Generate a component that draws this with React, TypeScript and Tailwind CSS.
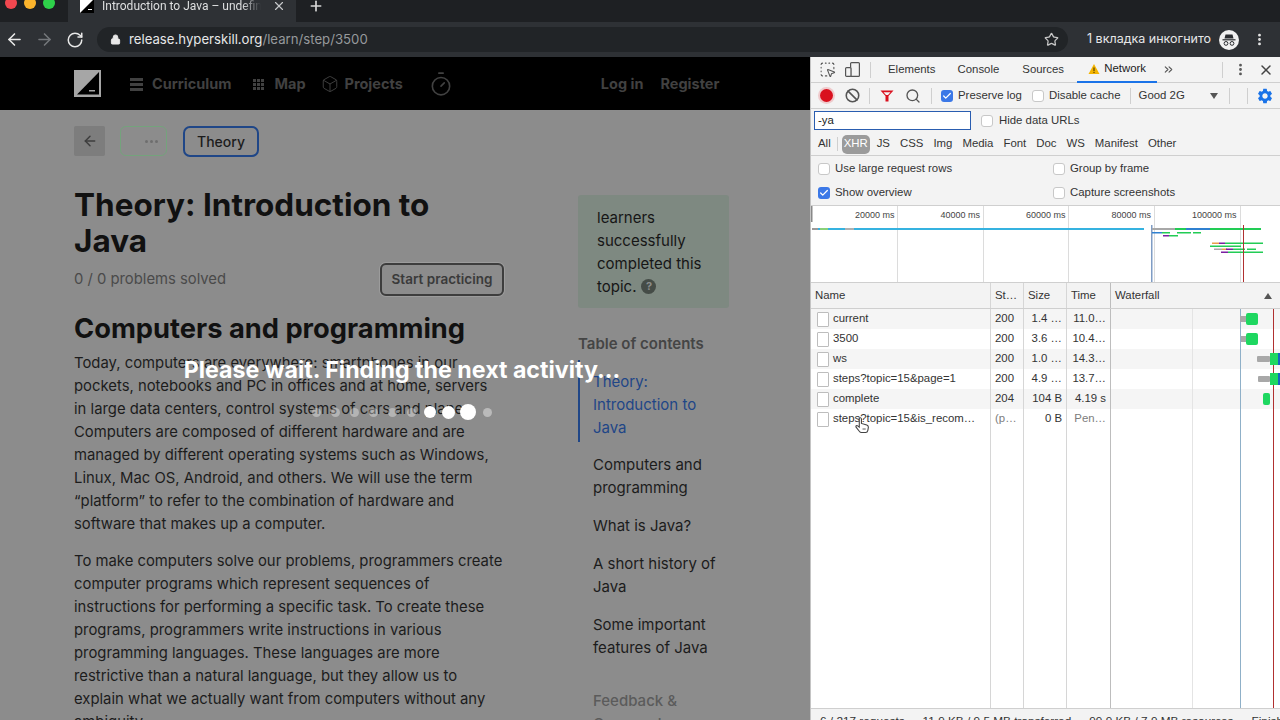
import { ArrowLeft, ArrowRight, Ban, Box, Check, ChevronsRight, EllipsisVertical, Lock, Plus, RotateCw, Search, SquareDashedMousePointer, Star, Timer, X } from 'lucide-react';
import { MdSettings } from 'react-icons/md';

const paragraphOne = [
  'Today, computers are everywhere: smartphones in our',
  'pockets, notebooks and PC in offices and at home, servers',
  'in large data centers, control systems of cars and planes.',
  'Computers are composed of different hardware and are',
  'managed by different operating systems such as Windows,',
  'Linux, Mac OS, Android, and others. We will use the term',
  '“platform” to refer to the combination of hardware and',
  'software that makes up a computer.',
];

const paragraphTwo = [
  'To make computers solve our problems, programmers create',
  'computer programs which represent sequences of',
  'instructions for performing a specific task. To create these',
  'programs, programmers write instructions in various',
  'programming languages. These languages are more',
  'restrictive than a natural language, but they allow us to',
  'explain what we actually want from computers without any',
  'ambiguity.',
];

const tocItems = [
  ['Computers and', 'programming'],
  ['What is Java?'],
  ['A short history of', 'Java'],
  ['Some important', 'features of Java'],
];

const requests = [
  { name: 'current', status: '200', size: '1.4 …', time: '11.0…' },
  { name: '3500', status: '200', size: '3.6 …', time: '10.4…' },
  { name: 'ws', status: '200', size: '1.0 …', time: '14.3…' },
  { name: 'steps?topic=15&page=1', status: '200', size: '4.9 …', time: '13.7…' },
  { name: 'complete', status: '204', size: '104 B', time: '4.19 s' },
  { name: 'steps?topic=15&is_recom…', status: '(p…', size: '0 B', time: 'Pen…', pending: true },
];

const typeFilters = ['JS', 'CSS', 'Img', 'Media', 'Font', 'Doc', 'WS', 'Manifest', 'Other'];

function Logo({ className }: { className: string }) {
  return (
    <svg viewBox="0 0 27 27" className={className}>
      <rect width="27" height="27" fill="#a6a6a6" />
      <path d="M3 24.5 25 2v22.5z" fill="#000" />
      <rect x="15" y="20" width="6" height="1.5" fill="#a6a6a6" />
    </svg>
  );
}

function Incognito() {
  return (
    <svg viewBox="0 0 20 20" className="w-5 h-5 block">
      <circle cx="10" cy="10" r="10" fill="#f1f1f1" />
      <path d="M6.500 4.500h7l1 4h-9z" fill="#2b2d31" />
      <rect x="3.500" y="9.200" width="13" height="1.200" fill="#2b2d31" />
      <circle cx="7" cy="13.400" r="1.900" fill="none" stroke="#2b2d31" strokeWidth="1" />
      <circle cx="13" cy="13.400" r="1.900" fill="none" stroke="#2b2d31" strokeWidth="1" />
    </svg>
  );
}

function Checkbox({ checked }: { checked?: boolean }) {
  if (checked) {
    return (
      <span className="w-[12px] h-[12px] rounded-[3px] bg-[#3b78e7] flex items-center justify-center shrink-0">
        <Check className="w-[10px] h-[10px] text-white" strokeWidth={3} />
      </span>
    );
  }
  return <span className="block w-[12px] h-[12px] rounded-[3px] border border-[#c8c8c8] bg-white shrink-0" />;
}

function Overview() {
  return (
    <svg viewBox="1 1 469 76" className="w-[469px] h-[76px] block">
      <rect x="1" y="0" width="1.500" height="17" fill="#888" />
      {[87, 173, 258, 344, 430].map((x) => (
        <rect key={x} x={x} y="0" width="1" height="77" fill="#dcdcdc" />
      ))}
      <rect x="2" y="23" width="332" height="2" fill="#35b2e0" />
      <rect x="2" y="23" width="6" height="2" fill="#9a9a9a" />
      <rect x="10" y="23" width="8" height="2" fill="#8ad07a" />
      <rect x="35" y="23" width="9" height="2" fill="#b0b0b0" />
      <rect x="341" y="20" width="1.500" height="57" fill="#7f9cc4" />
      <rect x="342" y="23" width="23" height="2" fill="#a8a8a8" />
      <rect x="365" y="23" width="86" height="2" fill="#22cc55" />
      <rect x="376" y="23" width="24" height="2" fill="#2f80d0" />
      <rect x="342" y="27" width="10" height="1.500" fill="#2f80d0" />
      <rect x="352" y="27" width="8" height="1.500" fill="#22cc55" />
      <rect x="367" y="27" width="14" height="1.500" fill="#22cc55" />
      <rect x="383" y="27" width="8" height="1.500" fill="#22cc55" />
      <rect x="353" y="30" width="6" height="1.500" fill="#7b1fa2" />
      <rect x="359" y="30" width="9" height="1.500" fill="#22cc55" />
      <rect x="402" y="37.500" width="7" height="1.500" fill="#e8a04c" />
      <rect x="409" y="37.500" width="6" height="1.500" fill="#7b1fa2" />
      <rect x="415" y="37.500" width="38" height="1.500" fill="#22cc55" />
      <rect x="400" y="40.500" width="31" height="1.500" fill="#22cc55" />
      <rect x="404" y="43.500" width="8" height="1.500" fill="#a8a8a8" />
      <rect x="412" y="43.500" width="5" height="1.500" fill="#e8a04c" />
      <rect x="416" y="43.500" width="7" height="1.500" fill="#7b1fa2" />
      <rect x="423" y="43.500" width="12" height="1.500" fill="#22cc55" />
      <rect x="437" y="43.500" width="9" height="1.500" fill="#22cc55" />
      <rect x="411" y="46.500" width="7" height="1.500" fill="#7b1fa2" />
      <rect x="418" y="46.500" width="35" height="1.500" fill="#22cc55" />
      <rect x="433" y="20" width="1" height="57" fill="#b03030" />
    </svg>
  );
}

function Waterfall() {
  return (
    <svg viewBox="0 0 169 400" className="absolute left-0 top-0 w-[169px] h-[400px]">
      <rect x="81" y="0" width="1" height="400" fill="#e4e4e4" />
      <rect x="129" y="0" width="1" height="400" fill="#8fb0c8" />
      <rect x="162" y="0" width="1" height="400" fill="#b03030" />
      <rect x="129" y="7" width="6" height="6" fill="#a8a8a8" />
      <rect x="135" y="4" width="12" height="12" rx="2" fill="#1ed760" />
      <rect x="130" y="27" width="5" height="6" fill="#a8a8a8" />
      <rect x="135" y="24" width="12" height="12" rx="2" fill="#1ed760" />
      <rect x="146" y="47" width="13" height="6" rx="1" fill="#a8a8a8" />
      <rect x="159" y="44" width="8" height="12" fill="#1ed760" />
      <rect x="167" y="44" width="2" height="12" fill="#1565c0" />
      <rect x="147" y="67" width="12" height="6" rx="1" fill="#a8a8a8" />
      <rect x="159" y="64" width="8" height="12" fill="#1ed760" />
      <rect x="167" y="64" width="2" height="12" fill="#1565c0" />
      <rect x="152" y="84" width="7" height="12" rx="2" fill="#1ed760" />
    </svg>
  );
}

// one table column: 20px cells, stripes start on the first row
function Column({ width, values, align, pending }: { width: string; values: string[]; align?: string; pending?: boolean }) {
  return (
    <div className={`${width} shrink-0 border-r border-[#d6d6d6]`}>
      {values.map((value, i) => (
        <div
          key={i}
          className={`h-5 flex items-center px-[4px] whitespace-nowrap overflow-hidden ${align ?? ''} ${i % 2 === 0 ? 'bg-[#f5f5f5]' : 'bg-white'} ${pending && i === 5 ? 'text-[#7c7c7c]' : ''}`}
        >
          {value}
        </div>
      ))}
    </div>
  );
}

function Browser() {
  return (
    <div className="font-['Inter',sans-serif] shrink-0">
      <div className="h-[22px] bg-[#1e2023] flex overflow-hidden">
        <div className="w-[68px] relative">
          <span className="absolute left-[5px] -top-[3px] w-3 h-3 rounded-full bg-[#f1474f]" />
          <span className="absolute left-[24px] -top-[3px] w-3 h-3 rounded-full bg-[#fbb32c]" />
          <span className="absolute left-[43px] -top-[3px] w-3 h-3 rounded-full bg-[#2ed14a]" />
        </div>
        <div className="w-[228px] bg-[#2e3135] flex items-start gap-2 pl-[12px] pr-[10px] pt-[5px] -mt-[6px] h-[28px]">
          <svg viewBox="0 0 14 14" className="w-[14px] h-[14px] shrink-0">
            <rect width="14" height="14" fill="#fff" />
            <path d="M0 14 14 0v14z" fill="#000" />
            <rect x="8" y="10" width="4" height="1" fill="#fff" />
          </svg>
          <span className="text-[12px] leading-[14px] font-['Roboto',sans-serif] text-[#dedfe0] whitespace-nowrap overflow-hidden flex-1 [mask-image:linear-gradient(to_right,black_88%,transparent)]">Introduction to Java – undefine</span>
          <X className="w-[14px] h-[14px] text-[#c6c8ca] shrink-0 ml-[3px]" />
        </div>
        <Plus className="w-[16px] h-[16px] text-[#d8d8d8] ml-[12px] mt-[-2px]" strokeWidth={2.5} />
      </div>
      <div className="h-[35px] bg-[#2e3135] flex items-center pl-[5px]">
        <ArrowLeft className="w-[19px] h-[19px] text-[#e8e8e8]" />
        <ArrowRight className="w-[19px] h-[19px] text-[#74777b] ml-[11px]" />
        <RotateCw className="w-[18px] h-[18px] text-[#e8e8e8] ml-[12px]" />
        <div className="ml-[13px] w-[971px] h-[25px] rounded-full bg-[#212427] flex items-center pl-[13px]">
          <Lock className="w-[11px] h-[11px] text-[#e8e8e8] fill-[#e8e8e8]" />
          <span className="ml-[8px] text-[13.200px] text-[#e6e7e8]">release.hyperskill.org</span>
          <span className="text-[13.200px] text-[#96999c]">/learn/step/3500</span>
          <Star className="w-[15px] h-[15px] text-[#c8c8c8] ml-auto mr-[9px]" />
        </div>
        <span className="ml-[19px] text-[12.500px] text-[#e6e7e8] whitespace-nowrap">1 вкладка инкогнито</span>
        <span className="ml-[8px]"><Incognito /></span>
        <EllipsisVertical className="w-[15px] h-[15px] text-[#e8e8e8] ml-[13px]" strokeWidth={2.5} />
      </div>
    </div>
  );
}

function LoadingOverlay() {
  return (
    <div className="absolute left-0 right-0 top-[300px] pr-[6px] flex flex-col items-center">
      <div className="text-[23.200px] leading-[27px] font-bold text-white whitespace-nowrap">Please wait. Finding the next activity...</div>
      <div className="mt-[20px] flex items-center h-[16px]">
        {[0, 1, 2, 3, 4, 5].map((n) => (
          <span key={n} className="w-[9px] h-[9px] rounded-full bg-white/35 mr-[10px]" />
        ))}
        <span className="w-[12px] h-[12px] rounded-full bg-white -ml-[2.500px]" />
        <span className="w-[13px] h-[13px] rounded-full bg-white ml-[6.500px]" />
        <span className="w-[16px] h-[16px] rounded-full bg-white ml-[4.500px]" />
        <span className="w-[9px] h-[9px] rounded-full bg-white/40 ml-[7.500px]" />
      </div>
    </div>
  );
}

function Page() {
  return (
    <div className="relative w-[810px] shrink-0 bg-[#8c8c8c] font-['Inter',sans-serif] overflow-hidden">
      <nav className="h-[53px] bg-black flex items-center pl-[74px] pt-[1px] text-[14.500px] font-bold text-[#414141]">
        <Logo className="w-[27px] h-[27px] -mt-[1px]" />
        <div className="ml-[29px] flex flex-col gap-[2px] w-[13px]">
          <span className="h-[3px] bg-[#414141]" />
          <span className="h-[3px] bg-[#414141]" />
          <span className="h-[3px] bg-[#414141]" />
        </div>
        <span className="ml-[9px]">Curriculum</span>
        <div className="ml-[22px] grid grid-cols-3 gap-[1px]">
          {[1, 2, 3, 4, 5, 6, 7, 8, 9].map((n) => (
            <span key={n} className="w-[3px] h-[3px] bg-[#414141]" />
          ))}
        </div>
        <span className="ml-[10px]">Map</span>
        <Box className="ml-[15px] w-[18px] h-[18px]" strokeWidth={1.25} />
        <span className="ml-[6px]">Projects</span>
        <Timer className="ml-[25px] w-[26px] h-[26px] -mt-[1px]" strokeWidth={1.5} />
        <span className="ml-[147px]">Log in</span>
        <span className="ml-[17px]">Register</span>
      </nav>

      <div className="pl-[74px] pt-[16px]">
        <div className="flex items-center h-[30px]">
          <div className="w-[31px] h-[30px] bg-[#7d7d7d] rounded-[2px] flex items-center justify-center">
            <ArrowLeft className="w-[16px] h-[16px] text-[#3e3e3e]" strokeWidth={2.25} />
          </div>
          <div className="ml-[15px] w-[47px] h-[30px] rounded-[6px] border border-[#74a37c] flex items-center justify-end pr-[8px] gap-[2px]">
            <span className="w-[3px] h-[3px] rounded-full bg-[#6e6e6e]" />
            <span className="w-[3px] h-[3px] rounded-full bg-[#6e6e6e]" />
            <span className="w-[3px] h-[3px] rounded-full bg-[#6e6e6e]" />
          </div>
          <div className="ml-[16px] w-[76px] h-[31px] rounded-[7px] border-2 border-[#1f4687] flex items-center justify-center text-[14px] font-medium text-[#1c1c1c]">
            Theory
          </div>
        </div>

        <div className="flex mt-[39px]">
          <div className="w-[430px] -mt-[9px]">
            <h1 className="text-[31.500px] leading-[36px] font-bold text-[#111] whitespace-nowrap pt-[1px]">
              Theory: Introduction to<br />Java
            </h1>
            <div className="mt-[4px] flex items-center justify-between h-[32px]">
              <span className="text-[14.800px] text-[#4a4a4a]">0 / 0 problems solved</span>
              <div className="w-[124px] h-[33px] rounded-[6px] border-2 border-[#3d3d3d] flex items-center justify-center text-[13.500px] font-semibold text-[#3a3a3a] shadow-[0_0_0_1px_#9c9c9c]">
                Start practicing
              </div>
            </div>
            <h2 className="mt-[18px] text-[27.300px] leading-[32px] font-bold text-[#111] whitespace-nowrap">Computers and programming</h2>
            <div className="mt-[7px] text-[14.850px] leading-[23px] text-[#1c1c1c] whitespace-nowrap">
              {paragraphOne.map((line) => (
                <div key={line}>{line}</div>
              ))}
            </div>
            <div className="mt-[14px] text-[14.850px] leading-[23px] text-[#1c1c1c] whitespace-nowrap">
              {paragraphTwo.map((line) => (
                <div key={line}>{line}</div>
              ))}
            </div>
          </div>

          <div className="ml-[74px] w-[151px] text-[15px] leading-[23px]">
            <div className="h-[113px] bg-[#7e8981] rounded-[3px] pl-[19px] pt-[11px] text-[#161616]">
              learners<br />successfully<br />completed this<br />
              <span className="flex items-center gap-[5px]">
                topic.
                <span className="w-[15px] h-[15px] rounded-full bg-[#454c47] text-[#8c8c8c] text-[11px] leading-[15px] font-bold text-center">?</span>
              </span>
            </div>
            <div className="mt-[24px] text-[#454545] font-semibold">Table of contents</div>
            <div className="mt-[5px] border-l-2 border-[#1f4687] pl-[13px] pt-[10px] pb-[3px] text-[#1f4687]">
              Theory:<br />Introduction to<br />Java
            </div>
            <div className="text-[#1c1c1c] pl-[15px] -mt-[4px]">
              {tocItems.map((lines) => (
                <div key={lines[0]} className="mt-[15px]">
                  {lines.map((line) => (
                    <div key={line} className="whitespace-nowrap">{line}</div>
                  ))}
                </div>
              ))}
              <div className="mt-[30px] text-[#5b5b5b] font-medium">Feedback &<br />Comments</div>
            </div>
          </div>
        </div>
      </div>

      <LoadingOverlay />
    </div>
  );
}

function DevTools() {
  return (
    <div className="flex-1 min-w-0 flex flex-col bg-white border-l border-[#c4c4c4] font-['Liberation_Sans',sans-serif] text-[11.400px] text-[#333] overflow-hidden">
      <div className="h-[26px] shrink-0 bg-[#f3f3f3] border-b border-[#cfcfcf] flex items-center pl-[8px]">
        <SquareDashedMousePointer className="w-[17px] h-[17px] text-[#555]" strokeWidth={1.5} />
        <svg viewBox="0 0 15 15" className="w-[15px] h-[15px] ml-[9px]" fill="none" stroke="#555" strokeWidth="1.200">
          <rect x="5.600" y="0.600" width="8.800" height="13.800" rx="1" />
          <rect x="0.600" y="5.600" width="5.400" height="8.800" rx="1" fill="#f3f3f3" />
        </svg>
        <span className="w-px h-[16px] bg-[#cfcfcf] ml-[10px]" />
        <span className="ml-[17px]">Elements</span>
        <span className="ml-[22px]">Console</span>
        <span className="ml-[23px]">Sources</span>
        <div className="ml-[13px] w-[80px] h-[25px] border-b-2 border-[#1a73e8] flex items-center justify-center gap-[4px] mt-[1px]">
          <svg viewBox="0 0 12 12" className="w-[12px] h-[12px]">
            <path d="M6 1 11.500 11H.5z" fill="#f4b400" />
            <rect x="5.400" y="4.500" width="1.200" height="3.500" fill="#5a4300" />
            <rect x="5.400" y="8.800" width="1.200" height="1.200" fill="#5a4300" />
          </svg>
          <span className="text-[#222]">Network</span>
        </div>
        <ChevronsRight className="w-[13px] h-[13px] text-[#555] ml-[5px]" />
        <span className="w-px h-[16px] bg-[#cfcfcf] ml-[47px]" />
        <EllipsisVertical className="w-[15px] h-[15px] text-[#555] ml-[10px]" strokeWidth={2.5} />
        <X className="w-[16px] h-[16px] text-[#444] ml-[10px]" strokeWidth={2.25} />
      </div>

      <div className="h-[26px] shrink-0 bg-[#f3f3f3] border-b border-[#cfcfcf] flex items-center pl-[9px]">
        <span className="w-[13px] h-[13px] rounded-full bg-[#d9101e] ring-2 ring-[#e98b90]/40" />
        <Ban className="w-[15px] h-[15px] text-[#555] ml-[12px]" strokeWidth={2.5} />
        <span className="w-px h-[16px] bg-[#cfcfcf] ml-[9px]" />
        <svg viewBox="0 0 14 12" className="w-[14px] h-[12px] ml-[10px]">
          <path d="M.5.5h13L8.500 6v5.500h-3V6zM3.500 2.200 6 5h2l2.500-2.800z" fill="#d9101e" fillRule="evenodd" />
        </svg>
        <Search className="w-[16px] h-[16px] text-[#555] ml-[11px]" />
        <span className="w-px h-[16px] bg-[#cfcfcf] ml-[10px]" />
        <span className="ml-[9px]"><Checkbox checked /></span>
        <span className="ml-[5px]">Preserve log</span>
        <span className="ml-[10px]"><Checkbox /></span>
        <span className="ml-[5px]">Disable cache</span>
        <span className="w-px h-[16px] bg-[#cfcfcf] ml-[9px]" />
        <span className="ml-[8px]">Good 2G</span>
        <span className="ml-[25px] w-0 h-0 border-x-[4px] border-x-transparent border-t-[6px] border-t-[#555]" />
        <span className="w-px h-[16px] bg-[#cfcfcf] ml-[11px]" />
        <span className="w-px h-[16px] bg-[#cfcfcf] ml-[17px]" />
        <MdSettings className="w-[18px] h-[18px] text-[#1a73e8] ml-[8px]" />
      </div>

      <div className="h-[24px] shrink-0 bg-[#f3f3f3] flex items-center pl-[3px] pb-[1px]">
        <div className="w-[157px] h-[19px] bg-white border border-[#2a5db0] flex items-center pl-[3px] text-[#222]">-ya</div>
        <span className="ml-[10px]"><Checkbox /></span>
        <span className="ml-[6px]">Hide data URLs</span>
      </div>

      <div className="h-[23px] shrink-0 bg-[#f3f3f3] border-b border-[#cfcfcf] flex items-center pl-[7px]">
        <span>All</span>
        <span className="w-px h-[14px] bg-[#cfcfcf] ml-[6px]" />
        <span className="ml-[4px] h-[19px] w-[28px] rounded-[5px] bg-[#9b9b9b] text-white flex items-center justify-center">XHR</span>
        <div className="flex ml-[7px] gap-[10px]">
          {typeFilters.map((t) => (
            <span key={t}>{t}</span>
          ))}
        </div>
      </div>

      <div className="h-[50px] shrink-0 bg-[#f3f3f3] border-b border-[#cfcfcf] grid grid-cols-[235px_1fr] grid-rows-2 items-center pl-[7px] pt-[1px]">
        <div className="flex items-center gap-[5px]"><Checkbox />Use large request rows</div>
        <div className="flex items-center gap-[5px]"><Checkbox />Group by frame</div>
        <div className="flex items-center gap-[5px]"><Checkbox checked />Show overview</div>
        <div className="flex items-center gap-[5px]"><Checkbox />Capture screenshots</div>
      </div>

      <div className="h-[77px] shrink-0 bg-white border-b border-[#cfcfcf] relative">
        <Overview />
        <div className="absolute inset-x-0 top-[3px] flex text-[9px] text-[#444]">
          {['20000 ms', '40000 ms', '60000 ms', '80000 ms', '100000 ms'].map((label) => (
            <span key={label} className="w-[85.500px] text-right pr-[2px] whitespace-nowrap">{label}</span>
          ))}
        </div>
      </div>

      <div className="h-[26px] shrink-0 bg-[#f3f3f3] border-b border-[#cfcfcf] flex items-center">
        <div className="w-[180px] h-full flex items-center px-[4px] border-r border-[#d6d6d6]">Name</div>
        <div className="w-[33px] h-full flex items-center px-[4px] border-r border-[#d6d6d6]">St…</div>
        <div className="w-[43px] h-full flex items-center px-[4px] border-r border-[#d6d6d6]">Size</div>
        <div className="w-[44px] h-full flex items-center px-[4px] border-r border-[#bdbdbd]">Time</div>
        <div className="flex-1 h-full flex items-center justify-between pl-[4px] pr-[8px]">
          Waterfall
          <span className="w-0 h-0 border-x-[4px] border-x-transparent border-b-[6px] border-b-[#555]" />
        </div>
      </div>

      <div className="flex-1 min-h-0 flex overflow-hidden">
        <div className="w-[180px] shrink-0 border-r border-[#d6d6d6]">
          {requests.map((r, i) => (
            <div key={r.name} className={`h-5 flex items-center pl-[6px] whitespace-nowrap ${i % 2 === 0 ? 'bg-[#f5f5f5]' : 'bg-white'}`}>
              <span className="w-[12px] h-[15px] bg-white border border-[#bdbdbd] rounded-[1px] shrink-0" />
              <span className="ml-[4px]">{r.name}</span>
            </div>
          ))}
        </div>
        <Column width="w-[33px]" values={requests.map((r) => r.status)} pending />
        <Column width="w-[43px]" values={requests.map((r) => r.size)} align="justify-end" />
        <Column width="w-[44px]" values={requests.map((r) => r.time)} align="justify-end" pending />
        <div className="flex-1 relative border-l border-[#bdbdbd] -ml-px">
          {requests.map((r, i) => (
            <div key={r.name} className={`h-5 ${i % 2 === 0 ? 'bg-[#f5f5f5]' : 'bg-white'}`} />
          ))}
          <Waterfall />
        </div>
      </div>

      <div className="h-[12px] shrink-0 bg-[#f3f3f3] border-t border-[#cfcfcf] flex pl-[9px] whitespace-nowrap overflow-hidden leading-[25px] text-[11.800px]">
        <span>6 / 217 requests</span>
        <span className="w-px h-[12px] bg-[#cfcfcf] ml-[9px]" />
        <span className="ml-[9px]">11.9 KB / 9.5 MB transferred</span>
        <span className="w-px h-[12px] bg-[#cfcfcf] ml-[9px]" />
        <span className="ml-[9px]">99.9 KB / 7.9 MB resources</span>
        <span className="w-px h-[12px] bg-[#cfcfcf] ml-[9px]" />
        <span className="ml-[9px]">Finish: 1.7 min</span>
      </div>
    </div>
  );
}

export default function App() {
  return (
    <div className="w-[1280px] h-[720px] flex flex-col overflow-hidden relative">
      <Browser />
      <div className="flex-1 min-h-0 flex">
        <Page />
        <DevTools />
      </div>
      {/* hand cursor over the last request row */}
      <svg viewBox="0 0 14 16" className="absolute left-[855px] top-[416px] w-[15px] h-[18px]">
        <path d="M4 1.500c1-.8 2 0 2 1v4l5 1.500c1 .4 1.500 1 1.500 2l-.5 3c-.2 1-1 2-2 2H6c-1 0-1.500-.5-2-1.200L1 10c-.5-1 .5-2 1.500-1.200L4 10z" fill="#fff" stroke="#444" strokeWidth="1" />
        <path d="M7 11h3v1.500H7z" fill="#999" />
      </svg>
    </div>
  );
}
